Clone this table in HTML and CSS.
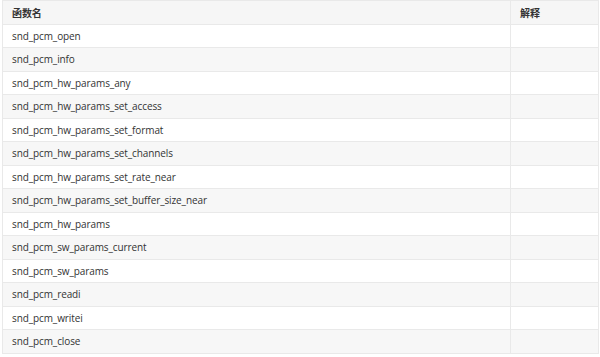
FILE: index.html
```html
<!DOCTYPE html>
<html>
<head>
<meta charset="utf-8">
<link rel="stylesheet" href="styles.css">
</head>
<body>
<table class="api-table">
  <thead>
    <tr><th class="col-name">函数名</th><th class="col-desc">解释</th></tr>
  </thead>
  <tbody>
    <tr><td>snd_pcm_open</td><td></td></tr>
    <tr><td>snd_pcm_info</td><td></td></tr>
    <tr><td>snd_pcm_hw_params_any</td><td></td></tr>
    <tr><td>snd_pcm_hw_params_set_access</td><td></td></tr>
    <tr><td>snd_pcm_hw_params_set_format</td><td></td></tr>
    <tr><td>snd_pcm_hw_params_set_channels</td><td></td></tr>
    <tr><td>snd_pcm_hw_params_set_rate_near</td><td></td></tr>
    <tr><td>snd_pcm_hw_params_set_buffer_size_near</td><td></td></tr>
    <tr><td>snd_pcm_hw_params</td><td></td></tr>
    <tr><td>snd_pcm_sw_params_current</td><td></td></tr>
    <tr><td>snd_pcm_sw_params</td><td></td></tr>
    <tr><td>snd_pcm_readi</td><td></td></tr>
    <tr><td>snd_pcm_writei</td><td></td></tr>
    <tr><td>snd_pcm_close</td><td></td></tr>
  </tbody>
</table>
</body>
</html>
```
FILE: styles.css
```css
html, body {
  margin: 0;
  padding: 0;
  background: #ffffff;
}
body {
  padding: 0 3px 0 2px;
  font-family: "Open Sans", "Noto Sans CJK SC", sans-serif;
  font-size: 10px;
  letter-spacing: -0.1px;
  color: #333333;
}
.api-table {
  width: 596px;
  border-collapse: collapse;
  table-layout: fixed;
}
.api-table th,
.api-table td {
  border: 1px solid #e9e9e9;
  padding: 0 0 0 9px;
  height: 23.5px;
  text-align: left;
  vertical-align: middle;
  box-sizing: border-box;
}
.api-table th {
  background: #f6f6f6;
  font-weight: 700;
  color: #333333;
}
.col-name { width: 508px; }
.col-desc { width: 88px; }
.api-table tbody tr:nth-child(even) td {
  background: #f7f7f7;
}
.api-table tbody tr:nth-child(odd) td {
  background: #ffffff;
}
```
